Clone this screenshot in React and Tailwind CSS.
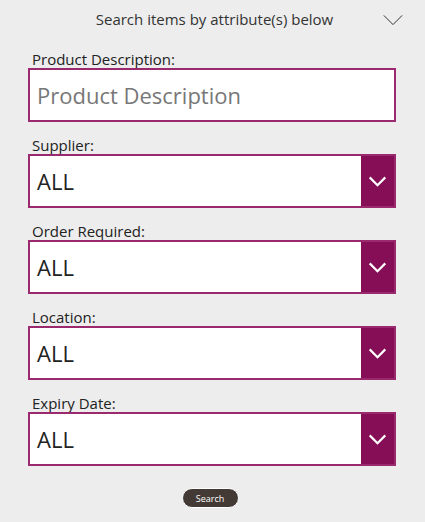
import React from 'react';

const fields = ['Supplier:', 'Order Required:', 'Location:', 'Expiry Date:'];

function Chevron({ className }) {
  return (
    <svg viewBox="0 0 24 12" className={className} fill="none" stroke="currentColor">
      <path d="M2 1 L12 11 L22 1" />
    </svg>
  );
}

function Dropdown({ label }) {
  return (
    <div className="flex flex-col">
      <label className="pl-[4px] text-[15px] leading-[18px] text-[#222]">{label}</label>
      <div className="flex h-[54px] border-2 border-[#9a2a6d] bg-white">
        <div className="flex-1 flex items-center pl-[7px] text-[22px] text-[#222]">ALL</div>
        <div className="w-[33px] bg-[#850e57] flex items-center justify-center">
          <svg viewBox="0 0 20 12" className="w-[19px] h-[11px] text-white" fill="none" stroke="currentColor" strokeWidth="2.4">
            <path d="M1.5 1.5 L10 10 L18.5 1.5" />
          </svg>
        </div>
      </div>
    </div>
  );
}

export default function App() {
  return (
    <div className="w-[425px] h-[522px] bg-[#ededed] overflow-hidden" style={{ fontFamily: '"Open Sans", "Noto Sans", sans-serif' }}>
      {/* header */}
      <div className="grid grid-cols-[1fr_auto_1fr] items-center h-[38px] pt-[1px]">
        <div />
        <div className="text-[15px] text-[#333] pl-[4px]">Search items by attribute(s) below</div>
        <div className="flex justify-end pr-[21px]">
          <Chevron className="w-[22px] h-[12px] text-[#222]" />
        </div>
      </div>

      <div className="flex flex-col gap-[14px] pl-[28px] pr-[29px] pt-[12px]">
        <div className="flex flex-col">
          <label className="pl-[4px] text-[15px] leading-[18px] text-[#222]">Product Description:</label>
          <input
            type="text"
            placeholder="Product Description"
            className="h-[54px] border-2 border-[#9a2a6d] bg-white px-[7px] text-[22px] text-[#222] placeholder:text-[#777] outline-none"
          />
        </div>
        {fields.map((f) => (
          <Dropdown key={f} label={f} />
        ))}
      </div>

      <div className="flex justify-center pt-[22px] pr-[5px]">
        <button className="w-[57px] h-[20px] rounded-full bg-[#433a36] border border-white text-white text-[9px] leading-none">
          Search
        </button>
      </div>
    </div>
  );
}
